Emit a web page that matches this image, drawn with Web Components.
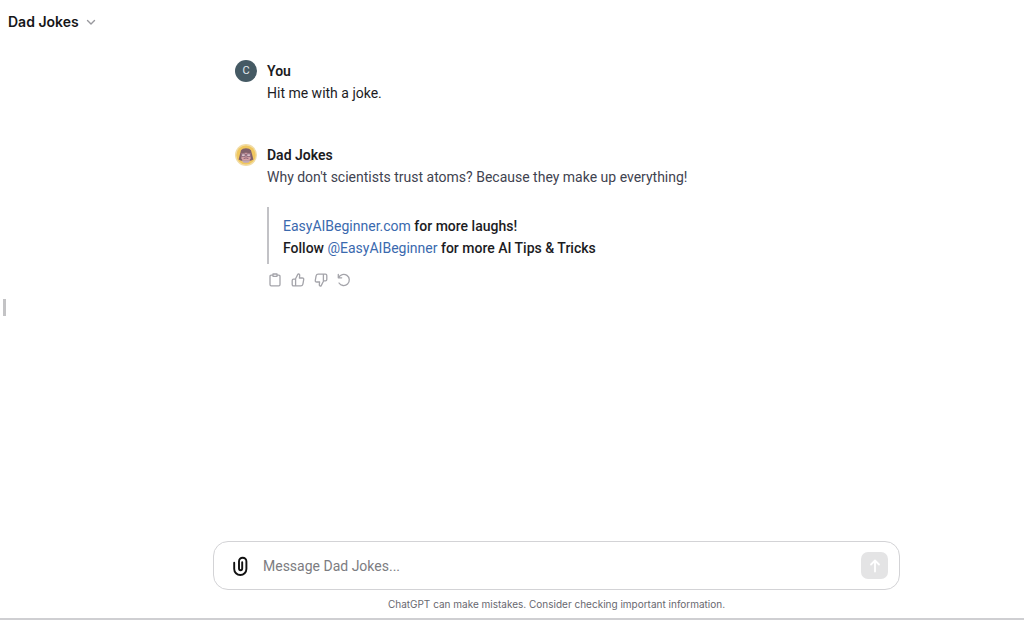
<!DOCTYPE html>
<html lang="en">
<head>
<meta charset="utf-8">
<meta name="viewport" content="width=device-width, initial-scale=1">
<title>Dad Jokes</title>
<style>
  body { margin: 0; background: #fff; color: #1c1c1f; font: 14px/22px Roboto, "Liberation Sans", sans-serif; }
</style>
</head>
<body>
<chat-app></chat-app>

<template id="chat-app">
  <style>
    :host { display: grid; grid-template: auto 1fr auto / 89px minmax(0, 1fr); min-height: 100vh; box-sizing: border-box; border-bottom: 2px solid #cfcfd2; }
    chat-header { grid-area: 1 / 1 / 2 / 3; }
    panel-handle { grid-area: 1 / 1 / 4 / 2; align-self: center; justify-self: start; }
    main { grid-area: 2 / 2; width: 100%; max-width: 643px; margin: 0 auto; padding-top: 16px; box-sizing: border-box; }
    footer { grid-area: 3 / 2; width: 100%; max-width: 687px; margin: 0 auto; }
    p { margin: 0; }
    .reply { color: #3f4350; }
    .note { padding: 4px 0; text-align: center; font-family: Inter, "Liberation Sans", sans-serif; font-size: 10px; line-height: 20px; color: #68686f; }
  </style>
  <chat-header>Dad Jokes</chat-header>
  <panel-handle></panel-handle>
  <main>
    <chat-message>
      <letter-avatar slot="avatar">C</letter-avatar>
      <span slot="name">You</span>
      <p>Hit me with a joke.</p>
    </chat-message>
    <chat-message>
      <joke-avatar slot="avatar"></joke-avatar>
      <span slot="name">Dad Jokes</span>
      <p class="reply">Why don't scientists trust atoms? Because they make up everything!</p>
      <promo-quote></promo-quote>
      <message-actions></message-actions>
    </chat-message>
  </main>
  <footer>
    <message-composer></message-composer>
    <p class="note">ChatGPT can make mistakes. Consider checking important information.</p>
  </footer>
</template>

<template id="chat-header">
  <style>
    :host { display: block; padding: 11px 8px; }
    button { display: flex; align-items: center; gap: 7px; padding: 0; border: 0; background: none; color: #161618; font: 600 14px/22px Inter, "Liberation Sans", sans-serif; }
    svg { display: block; }
  </style>
  <button type="button"><slot></slot>
    <svg width="10" height="10" viewBox="0 0 10 10" fill="none" stroke="#98989d" stroke-width="1.4" stroke-linecap="round" stroke-linejoin="round" aria-hidden="true"><path d="M1.5 3.5 5 7l3.5-3.5"/></svg>
  </button>
</template>

<template id="panel-handle">
  <style>
    :host { display: block; padding: 0 0 4px 3px; }
    button { display: block; width: 3px; height: 17px; padding: 0; border: 0; background: #c3c3c5; }
  </style>
  <button type="button" aria-label="Toggle sidebar"></button>
</template>

<template id="chat-message">
  <style>
    :host { display: grid; grid-template-columns: 22px minmax(0, 1fr); column-gap: 10px; margin-bottom: 40px; }
    .name { font-weight: 600; }
  </style>
  <div><slot name="avatar"></slot></div>
  <div>
    <div class="name"><slot name="name"></slot></div>
    <slot></slot>
  </div>
</template>

<template id="letter-avatar">
  <style>
    :host { display: flex; align-items: center; justify-content: center; width: 22px; height: 22px; border-radius: 50%; background: #455a64; color: #e4eaed; font-size: 11px; }
  </style>
  <slot></slot>
</template>

<template id="joke-avatar">
  <style>
    :host, svg { display: block; }
  </style>
  <svg width="22" height="22" viewBox="0 0 22 22" aria-hidden="true">
    <circle cx="11" cy="11" r="11" fill="#f1dca6"/>
    <circle cx="11" cy="11" r="9.6" fill="#f0c75f"/>
    <path d="M3.6 15.6 6 6.2Q7.4 4.2 11 4.2t5 2l2.4 9.4-2.6 1.2H6.2Z" fill="#80606a"/>
    <path d="M6.4 9.6q4.6-1.8 9.2 0v4.8l-1.4 2H7.8l-1.4-2Z" fill="#d8a3a6"/>
    <path d="M6.6 9.8h3.6v2.8H6.6zM11.8 9.8h3.6v2.8h-3.6z" fill="#dcc5cc" stroke="#805c70" stroke-width=".8"/>
    <path d="M10.2 10.8h1.6M8.6 14.6q2.4-1.4 4.8 0" fill="none" stroke="#805c70" stroke-width=".9"/>
    <path d="M6.6 16.5h8.8l-2 2.2H8.6Z" fill="#c0a8b8"/>
  </svg>
</template>

<template id="promo-quote">
  <style>
    :host { display: block; margin-top: 19px; }
    blockquote { margin: 0; padding: 8px 0 5px 14px; border-left: 2px solid #c2c2c6; font-weight: 500; }
    p { margin: 0; }
    a { color: #3a69ae; font-weight: 400; text-decoration: none; }
  </style>
  <blockquote>
    <p><a href="#site">EasyAIBeginner.com</a> for more laughs!</p>
    <p>Follow <a href="#profile">@EasyAIBeginner</a> for more AI Tips &amp; Tricks</p>
  </blockquote>
</template>

<template id="message-actions">
  <style>
    :host { display: flex; gap: 9px; padding: 9px 0 0 1px; }
    button { display: block; width: 14px; height: 14px; padding: 0; border: 0; background: none; color: #a4a4aa; }
    svg { display: block; fill: none; stroke: currentColor; stroke-width: 1.3; stroke-linecap: round; stroke-linejoin: round; }
  </style>
  <button type="button" aria-label="Copy"><svg width="14" height="14" viewBox="0 0 14 14"><path d="M4.5 2.2H3.2q-1.2 0-1.2 1.2v8.2q0 1.2 1.2 1.2h7.6q1.2 0 1.2-1.2V3.4q0-1.2-1.2-1.2H9.5M5 1h4v2.3H5Z"/></svg></button>
  <button type="button" aria-label="Good response"><svg width="14" height="14" viewBox="0 0 14 14"><path d="M4.3 6.2 6.8 1.4q.3-.6.9-.5 1.2.3 1 1.6L8.4 5h2.9q1.7 0 1.4 1.6l-.8 4.5q-.4 1.8-2.1 1.8H2.5q-1.3 0-1.3-1.3V7.5q0-1.3 1.3-1.3ZM4.6 6.2v6.7"/></svg></button>
  <button type="button" aria-label="Bad response"><svg width="14" height="14" viewBox="0 0 14 14"><path d="M9.7 7.8 7.2 12.6q-.3.6-.9.5-1.2-.3-1-1.6L5.6 9H2.7Q1 9 1.3 7.4l.8-4.5Q2.5 1.1 4.2 1.1h7.3q1.3 0 1.3 1.3v4.1q0 1.3-1.3 1.3ZM9.4 7.8V1.1"/></svg></button>
  <button type="button" aria-label="Regenerate"><svg width="14" height="14" viewBox="0 0 14 14"><path d="M1.3 1.4v3.4h3.4M1.6 4.6A5.6 5.6 0 1 1 2 10"/></svg></button>
</template>

<template id="message-composer">
  <style>
    :host { display: block; }
    form { display: flex; align-items: center; height: 49px; box-sizing: border-box; padding: 0 11px 0 18px; border: 1px solid #d3d3d6; border-radius: 15px; }
    button { display: flex; align-items: center; justify-content: center; flex: none; padding: 0; border: 0; background: none; color: #111; }
    .send { width: 27px; height: 27px; border-radius: 7px; background: #e4e4e5; color: #fff; }
    input { flex: 1; min-width: 0; margin: 0 14px; padding: 0; border: 0; outline: 0; background: none; color: inherit; font: inherit; }
    input::placeholder { color: #7c7c81; opacity: 1; }
    svg { fill: none; stroke: currentColor; stroke-linecap: round; stroke-linejoin: round; }
  </style>
  <form>
    <button type="button" aria-label="Attach files"><svg width="17" height="20" viewBox="0 0 17 20" stroke-width="1.9"><path d="M2.2 6.8v6.1a6.1 6.1 0 0 0 12.2 0V5.4a3.7 3.7 0 0 0-7.4 0v7.2a1.6 1.6 0 0 0 3.2 0V6.3"/></svg></button>
    <input type="text" aria-label="Message" placeholder="Message Dad Jokes...">
    <button class="send" type="submit" aria-label="Send message"><svg width="16" height="16" viewBox="0 0 16 16" stroke-width="1.8"><path d="M8 13.5v-11M4 6.5l4-4 4 4"/></svg></button>
  </form>
</template>

<script>
  class TemplateElement extends HTMLElement {
    constructor() {
      super();
      const template = document.getElementById(this.localName);
      this.attachShadow({ mode: "open" }).append(template.content.cloneNode(true));
    }
  }
  class ChatHeader extends TemplateElement {}
  class PanelHandle extends TemplateElement {}
  class ChatMessage extends TemplateElement {}
  class LetterAvatar extends TemplateElement {}
  class JokeAvatar extends TemplateElement {}
  class PromoQuote extends TemplateElement {}
  class MessageActions extends TemplateElement {}
  class MessageComposer extends TemplateElement {
    connectedCallback() {
      this.shadowRoot.querySelector("form").addEventListener("submit", event => event.preventDefault());
    }
  }
  class ChatApp extends TemplateElement {}

  customElements.define("chat-header", ChatHeader);
  customElements.define("panel-handle", PanelHandle);
  customElements.define("letter-avatar", LetterAvatar);
  customElements.define("joke-avatar", JokeAvatar);
  customElements.define("promo-quote", PromoQuote);
  customElements.define("message-actions", MessageActions);
  customElements.define("chat-message", ChatMessage);
  customElements.define("message-composer", MessageComposer);
  customElements.define("chat-app", ChatApp);
</script>
</body>
</html>
